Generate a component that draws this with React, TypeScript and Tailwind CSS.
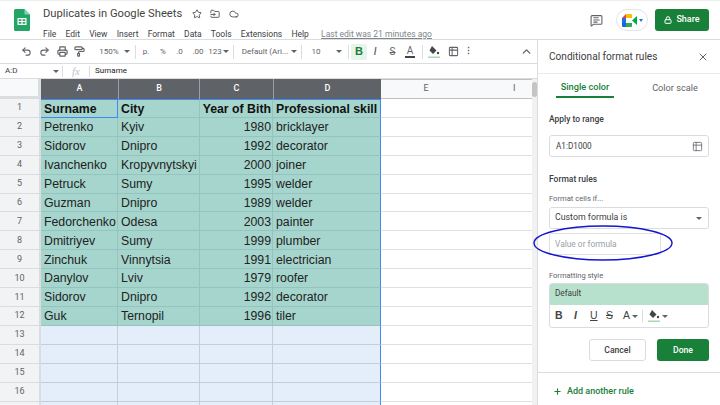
import React from 'react';
import { Star, Cloud, Lock, X, Plus, Undo2, Redo2, Printer, PaintRoller, ChevronUp, Table2, MessageSquareText, FolderInput } from 'lucide-react';

const rows = [
  ['Surname', 'City', 'Year of Bith', 'Professional skill'],
  ['Petrenko', 'Kyiv', '1980', 'bricklayer'],
  ['Sidorov', 'Dnipro', '1992', 'decorator'],
  ['Ivanchenko', 'Kropyvnytskyi', '2000', 'joiner'],
  ['Petruck', 'Sumy', '1995', 'welder'],
  ['Guzman', 'Dnipro', '1989', 'welder'],
  ['Fedorchenko', 'Odesa', '2003', 'painter'],
  ['Dmitriyev', 'Sumy', '1999', 'plumber'],
  ['Zinchuk', 'Vinnytsia', '1991', 'electrician'],
  ['Danylov', 'Lviv', '1979', 'roofer'],
  ['Sidorov', 'Dnipro', '1992', 'decorator'],
  ['Guk', 'Ternopil', '1996', 'tiler'],
  ['', '', '', ''],
  ['', '', '', ''],
  ['', '', '', ''],
  ['', '', '', ''],
  ['', '', '', ''],
];

const menus = ['File', 'Edit', 'View', 'Insert', 'Format', 'Data', 'Tools', 'Extensions', 'Help'];

const Caret = () => <span className="inline-block w-0 h-0 border-x-[3px] border-x-transparent border-t-[3px] border-t-[#5f6368]" />;
const Sep = () => <span className="w-px h-[14px] bg-[#dadce0] shrink-0" />;

const Tool: React.FC<{ w: string; children: React.ReactNode }> = ({ w, children }) => (
  <span className={`${w} h-full shrink-0 flex items-center justify-center text-[#5f6368] text-[8px] whitespace-nowrap`}>{children}</span>
);

const FillIcon = ({ bar }: { bar: string }) => (
  <svg width="12" height="14" viewBox="0 0 12 14">
    <path d="M4 1 L8.5 5.5 L5 9 L1.5 5.5 Z" fill="#444746" />
    <circle cx="10" cy="8" r="1.2" fill="#444746" />
    <rect x="0" y="11.5" width="12" height="1.5" fill={bar} />
  </svg>
);

const SheetsLogo = () => (
  <svg width="16" height="22" viewBox="0 0 16 22">
    <path d="M1.5 0 H10.5 L16 5.5 V20.5 A1.5 1.5 0 0 1 14.5 22 H1.5 A1.5 1.5 0 0 1 0 20.5 V1.5 A1.5 1.5 0 0 1 1.5 0 Z" fill="#23a566" />
    <path d="M10.5 0 L16 5.5 H11.5 A1 1 0 0 1 10.5 4.5 Z" fill="#8ed1b1" />
    <path d="M3.5 9 H12.5 V16 H3.5 Z M4.7 10.2 V11.9 H7.4 V10.2 Z M8.6 10.2 V11.9 H11.3 V10.2 Z M4.7 13.1 V14.8 H7.4 V13.1 Z M8.6 13.1 V14.8 H11.3 V13.1 Z" fill="#fff" fillRule="evenodd" />
  </svg>
);

const MeetLogo = () => (
  <svg width="15" height="13" viewBox="0 0 15 13">
    <path d="M0 4 L4 0 V4 Z" fill="#ea4335" />
    <path d="M4 0 H9 A1 1 0 0 1 10 1 V4 H4 Z" fill="#fbbc04" />
    <path d="M0 4 H4 V9 H0 Z" fill="#1a73e8" />
    <path d="M0 9 H4 V13 H1 A1 1 0 0 1 0 12 Z" fill="#1967d2" />
    <path d="M4 9 H10 V12 A1 1 0 0 1 9 13 H4 Z" fill="#34a853" />
    <path d="M10 6.5 L15 2 V11 L10 6.5 Z" fill="#00ac47" />
    <path d="M4 4 H10 V9 H4 Z" fill="#fff" />
  </svg>
);

export default function App() {
  return (
    <div className="relative w-[720px] h-[405px] overflow-hidden bg-white text-[#3c4043]" style={{ fontFamily: 'Roboto, sans-serif' }}>
      {/* Title bar */}
      <div className="h-[40px] flex items-start border-t border-[#eeeeee] border-b border-b-[#dadce0]">
        <div className="ml-[14px] mt-[8px]"><SheetsLogo /></div>
        <div className="ml-[13px] mt-[5px] flex flex-col">
          <div className="flex items-center h-[16px]">
            <span className="text-[11.2px] text-[#444] w-[137px] whitespace-nowrap">Duplicates in Google Sheets</span>
            <Star size={10} className="text-[#444] ml-[12px]" />
            <FolderInput size={10} className="text-[#444] ml-[8px]" />
            <Cloud size={10} className="text-[#444] ml-[9px]" />
          </div>
          <div className="flex items-center gap-[9.2px] mt-[6px] text-[8.5px] text-[#3c4043] whitespace-nowrap">
            {menus.map(m => <span key={m}>{m}</span>)}
            <span className="ml-[3px] underline text-[#80868b]">Last edit was 21 minutes ago</span>
          </div>
        </div>
        <div className="ml-auto mr-[11px] mt-[8px] flex items-center">
          <MessageSquareText size={13} className="text-[#5f6368]" />
          <span className="ml-[13px] w-[32px] h-[22px] rounded-full border border-[#e3e5e8] flex items-center justify-center gap-[2px]">
            <MeetLogo />
            <span className="inline-block w-0 h-0 border-x-[2.5px] border-x-transparent border-t-[3px] border-t-[#1a73e8]" />
          </span>
          <span className="ml-[7px] w-[54px] h-[22px] rounded-[3px] bg-[#188038] text-white text-[9px] font-medium flex items-center justify-center gap-[4px]">
            <Lock size={8} strokeWidth={3} /> Share
          </span>
        </div>
      </div>

      <div className="flex h-[365px]">
        {/* Sheet area */}
        <div className="w-[537px] shrink-0 flex flex-col">
          {/* Toolbar */}
          <div className="h-[24px] flex items-center pl-[17px] border-b border-[#dadce0]">
            <Tool w="w-[18px]"><Undo2 size={11} strokeWidth={2.4} /></Tool>
            <Tool w="w-[18px]"><Redo2 size={11} strokeWidth={2.4} /></Tool>
            <Tool w="w-[18px]"><Printer size={11} strokeWidth={2.6} /></Tool>
            <Tool w="w-[17px]"><PaintRoller size={11} strokeWidth={2.6} /></Tool>
            <span className="w-[11px]" />
            <Tool w="w-[20px]">150%</Tool>
            <span className="w-[3px]" />
            <Tool w="w-[10px]"><Caret /></Tool>
            <span className="w-[3px]" /><Sep />
            <Tool w="w-[20px]">p.</Tool>
            <Tool w="w-[14px]">%</Tool>
            <Tool w="w-[19px]">.0</Tool>
            <Tool w="w-[18px]">.00</Tool>
            <Tool w="w-[16px]">123</Tool>
            <Tool w="w-[5px]"><Caret /></Tool>
            <span className="w-[5px]" /><Sep />
            <span className="w-[4px]" />
            <Tool w="w-[54px]">Default (Ari...</Tool>
            <Tool w="w-[4px]"><Caret /></Tool>
            <span className="w-[5px]" /><Sep />
            <Tool w="w-[28px]">10</Tool>
            <Tool w="w-[18px]"><Caret /></Tool>
            <Sep />
            <span className="ml-[2px] w-[16px] h-[16px] rounded-[2px] bg-[#e6f4ea] text-[#188038] text-[11px] font-bold flex items-center justify-center" style={{ fontFamily: 'Liberation Sans, sans-serif' }}>B</span>
            <Tool w="w-[16px]"><span className="text-[10px] italic font-medium">I</span></Tool>
            <Tool w="w-[19px]"><span className="text-[10px] line-through">S</span></Tool>
            <Tool w="w-[16px]"><span className="text-[10px] border-b-2 border-[#444] leading-[11px] px-[2px]">A</span></Tool>
            <span className="w-[4px]" /><Sep />
            <Tool w="w-[22px]"><FillIcon bar="#a8dab5" /></Tool>
            <Tool w="w-[16px]"><Table2 size={11} strokeWidth={2.2} /></Tool>
            <Tool w="w-[14px]"><span className="text-[9px] leading-none font-bold">⋮</span></Tool>
            <span className="ml-auto mr-[4px] flex"><ChevronUp size={13} strokeWidth={2.5} className="text-[#5f6368]" /></span>
          </div>

          {/* Formula bar */}
          <div className="h-[15px] flex items-center text-[8px] border-b border-[#dadce0]">
            <span className="w-[53px] pl-[5px] text-[#3c4043]">A:D</span>
            <Caret />
            <span className="w-px h-[11px] bg-[#dadce0] ml-[3px]" />
            <span className="w-[26px] text-center text-[11px] italic text-[#bdc1c6]" style={{ fontFamily: 'Liberation Serif, serif' }}>fx</span>
            <span className="w-px h-[11px] bg-[#dadce0]" />
            <span className="ml-[5px] text-[#222]">Surname</span>
          </div>

          <div className="flex-1 flex min-h-0">
            {/* Grid */}
            <div className="flex-1 min-w-0 flex flex-col overflow-hidden">
              <div className="h-[20px] shrink-0 flex text-[9px] font-medium">
                <div className="w-[41px] bg-[#f8f9fa] border-r-[3px] border-b-[3px] border-[#dadce0]" />
                <div className="w-[78px] bg-[#5f6368] text-white flex items-center justify-center border-r border-[#9aa0a6]">A</div>
                <div className="w-[81px] bg-[#5f6368] text-white flex items-center justify-center border-r border-[#9aa0a6]">B</div>
                <div className="w-[74px] bg-[#5f6368] text-white flex items-center justify-center border-r border-[#9aa0a6]">C</div>
                <div className="w-[107px] bg-[#5f6368] text-white flex items-center justify-center">D</div>
                <div className="flex-1 flex items-center border-b border-[#c0c0c0] border-t text-[#5f6368] font-normal bg-[#f8f9fa]">
                  <span className="w-[90px] text-center">E</span>
                  <span className="ml-[42px]">I</span>
                </div>
              </div>
              <div className="flex-1 relative" style={{ fontFamily: 'Liberation Sans, Arial, sans-serif' }}>
                {rows.map((r, i) => {
                  const data = i < 12;
                  const bg = data ? 'bg-[#a6d5cd]' : 'bg-[#e4eefb]';
                  const line = data ? 'border-b-[#94c4bd] border-r-[#94c4bd]' : 'border-b-[#c5cdd8] border-r-[#c5cdd8]';
                  const bold = i === 0 ? 'font-bold text-[#111]' : 'text-[#222]';
                  const top = i === 0 ? 'border-t border-t-[#4285f4]' : '';
                  return (
                    <div key={i} className="h-[18.92px] flex text-[12.3px] leading-none">
                      <div className="w-[41px] shrink-0 bg-[#f1f3f4] border-r-[2px] border-b border-[#dadce0] text-[9px] text-[#5f6368] flex items-center justify-center" style={{ fontFamily: 'Roboto, sans-serif' }}>
                        {i < 16 ? i + 1 : ''}
                      </div>
                      <div className={`w-[77px] shrink-0 ${bg} ${bold} ${top} ${i === 0 ? 'border-r border-r-[#4285f4] border-b border-b-[#4285f4]' : `border-r border-b ${line}`} pl-[3px] pt-[1px] flex items-center whitespace-nowrap`}>{r[0]}</div>
                      <div className={`w-[82px] shrink-0 ${bg} ${bold} ${top} border-r border-b ${line} pl-[3px] pt-[1px] flex items-center whitespace-nowrap overflow-hidden`}>{r[1]}</div>
                      <div className={`w-[73px] shrink-0 ${bg} ${bold} ${top} border-r border-b ${line} pr-[1px] pt-[1px] flex items-center justify-end whitespace-nowrap`}>{r[2]}</div>
                      <div className={`w-[108px] shrink-0 ${bg} ${bold} ${top} border-b ${line} border-r border-r-[#4285f4]! pl-[3px] pt-[1px] flex items-center whitespace-nowrap`}>{r[3]}</div>
                      <div className="flex-1 border-b border-[#e0e0e0]" />
                    </div>
                  );
                })}
              </div>
            </div>
            {/* Scrollbar */}
            <div className="w-[5px] shrink-0 bg-[#f1f1f1] flex flex-col items-center pt-[3px]">
              <span className="w-full h-[15px] rounded-sm bg-[#c4c4c4]" />
            </div>
          </div>
        </div>

        {/* Side panel */}
        <div className="flex-1 border-l border-[#dadce0] flex flex-col text-[#3c4043]">
          <div className="h-[34px] shrink-0 pl-[11px] pr-[11px] flex items-center justify-between border-b border-[#e8eaed]">
            <span className="text-[10.1px] text-[#3c4043]">Conditional format rules</span>
            <X size={12} strokeWidth={2} className="text-[#5f6368]" />
          </div>
          <div className="h-[24px] shrink-0 flex text-[9.2px]">
            <div className="ml-[18px] w-[58px] h-full pt-[4px] flex items-center justify-center border-b-2 border-[#188038] text-[#188038] font-medium">Single color</div>
            <div className="ml-[36px] w-[50px] h-full pt-[4px] flex items-center justify-center text-[#5f6368]">Color scale</div>
          </div>
          <div className="pl-[11px] pr-[11px] flex flex-col">
            <div className="mt-[13px] text-[8.5px] font-medium leading-[16px]">Apply to range</div>
            <div className="mt-[8px] h-[22px] rounded-[3px] border border-[#dadce0] flex items-center justify-between pl-[6px] pr-[5px] text-[8.2px]">
              <span>A1:D1000</span>
              <Table2 size={11} className="text-[#70757a]" />
            </div>
            <div className="mt-[14px] text-[8.5px] font-medium leading-[16px]">Format rules</div>
            <div className="mt-[6px] text-[7.6px] text-[#5f6368] leading-[12px]">Format cells if...</div>
            <div className="mt-[2px] h-[22px] rounded-[3px] border border-[#dadce0] flex items-center justify-between pl-[5px] pr-[6px] text-[8.8px]">
              <span>Custom formula is</span>
              <Caret />
            </div>
            <div className="mt-[4px] w-[112px] h-[22px] rounded-[2px] border border-[#e0e0e0] flex items-center px-[5px] text-[8.4px] text-[#9aa0a6]">Value or formula</div>
            <div className="mt-[15px] text-[7.5px] text-[#5f6368] leading-[12px]">Formatting style</div>
            <div className="mt-[1px] h-[45px] rounded-[3px] border border-[#dadce0] overflow-hidden flex flex-col">
              <div className="h-[21px] bg-[#b7e1cd] flex items-center px-[5px] pb-[2px] text-[8.2px] text-[#3c4043]">Default</div>
              <div className="flex-1 flex items-center pl-[5px] text-[10.5px] text-[#444]" style={{ fontFamily: 'Liberation Sans, sans-serif' }}>
                <span className="w-[18px] font-bold">B</span>
                <span className="w-[17px] italic font-bold pl-[1px]">I</span>
                <span className="w-[16px] underline">U</span>
                <span className="w-[17px] line-through">S</span>
                <span className="w-[19px] flex items-center gap-[2px]">A<Caret /></span>
                <span className="w-px h-[12px] bg-[#dadce0] mr-[5px]" />
                <FillIcon bar="#a8dab5" />
                <span className="ml-[2px] flex"><Caret /></span>
              </div>
            </div>
            <div className="mt-[11px] flex justify-end gap-[11px] text-[8.6px] font-medium">
              <span className="w-[57px] h-[22px] rounded-[3px] border border-[#dadce0] flex items-center justify-center text-[#3c4043]">Cancel</span>
              <span className="w-[52px] h-[22px] rounded-[3px] bg-[#188038] text-white flex items-center justify-center">Done</span>
            </div>
          </div>
          <div className="mt-[11px] border-t border-[#dadce0] pl-[15px] pt-[12px] flex items-center gap-[5px] text-[9px] font-medium text-[#188038] leading-[12px]">
            <Plus size={9} strokeWidth={3} /> Add another rule
          </div>
        </div>
      </div>

      {/* Hand-drawn annotation ellipse */}
      <svg className="absolute left-[530px] top-[222px]" width="146" height="42" viewBox="0 0 146 42">
        <ellipse cx="73" cy="21" rx="69" ry="17" fill="none" stroke="#1414d2" strokeWidth="1.4" />
      </svg>
    </div>
  );
}
